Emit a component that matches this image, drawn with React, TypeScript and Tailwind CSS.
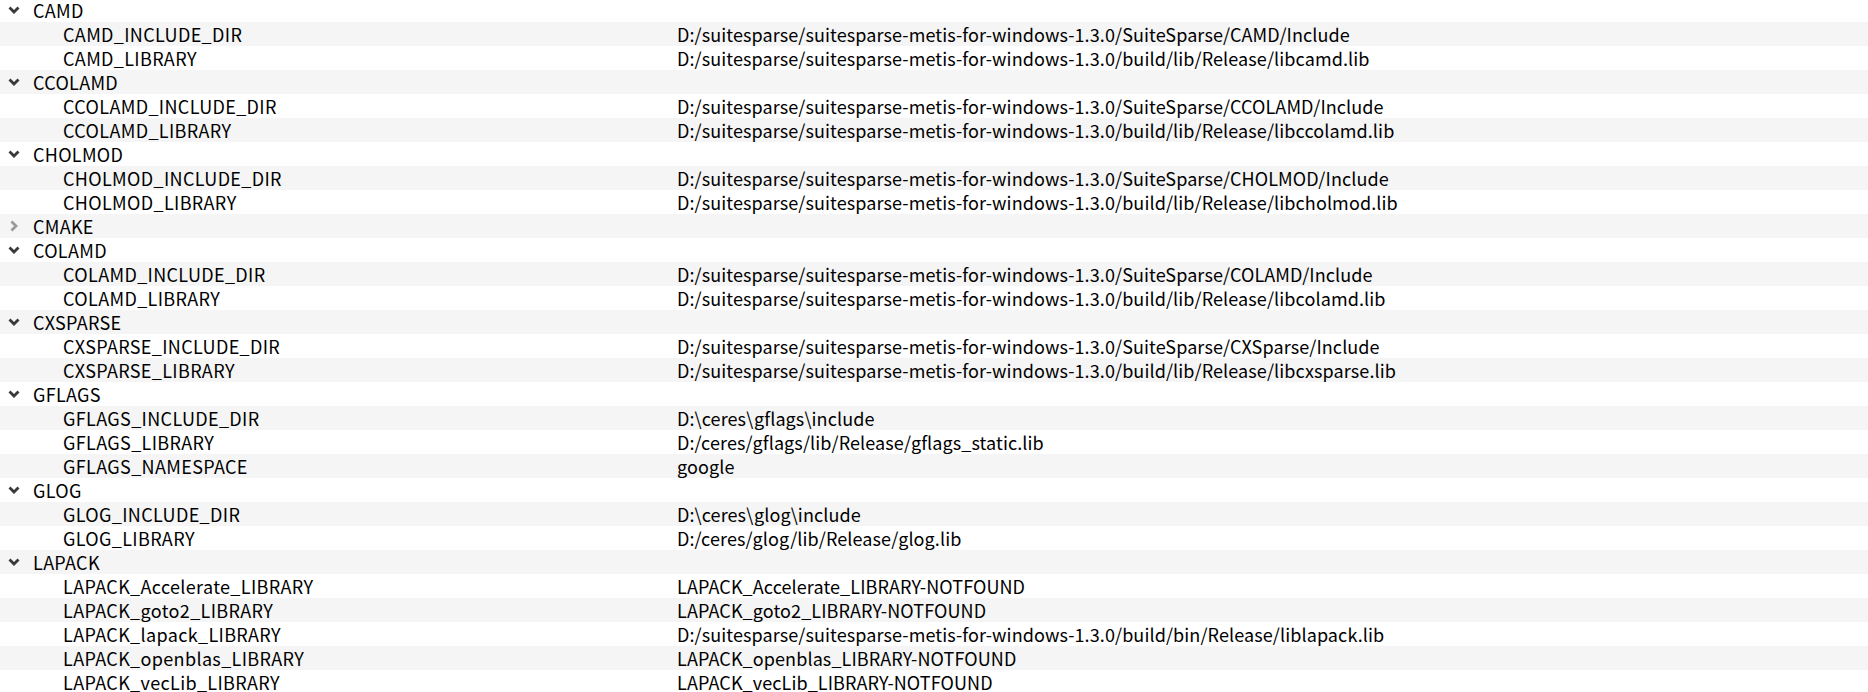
import React from "react";

type Row =
  | { kind: "group"; name: string; open: boolean }
  | { kind: "item"; name: string; value: string };

const S = "D:/suitesparse/suitesparse-metis-for-windows-1.3.0";

const rows: Row[] = [
  { kind: "group", name: "CAMD", open: true },
  { kind: "item", name: "CAMD_INCLUDE_DIR", value: `${S}/SuiteSparse/CAMD/Include` },
  { kind: "item", name: "CAMD_LIBRARY", value: `${S}/build/lib/Release/libcamd.lib` },
  { kind: "group", name: "CCOLAMD", open: true },
  { kind: "item", name: "CCOLAMD_INCLUDE_DIR", value: `${S}/SuiteSparse/CCOLAMD/Include` },
  { kind: "item", name: "CCOLAMD_LIBRARY", value: `${S}/build/lib/Release/libccolamd.lib` },
  { kind: "group", name: "CHOLMOD", open: true },
  { kind: "item", name: "CHOLMOD_INCLUDE_DIR", value: `${S}/SuiteSparse/CHOLMOD/Include` },
  { kind: "item", name: "CHOLMOD_LIBRARY", value: `${S}/build/lib/Release/libcholmod.lib` },
  { kind: "group", name: "CMAKE", open: false },
  { kind: "group", name: "COLAMD", open: true },
  { kind: "item", name: "COLAMD_INCLUDE_DIR", value: `${S}/SuiteSparse/COLAMD/Include` },
  { kind: "item", name: "COLAMD_LIBRARY", value: `${S}/build/lib/Release/libcolamd.lib` },
  { kind: "group", name: "CXSPARSE", open: true },
  { kind: "item", name: "CXSPARSE_INCLUDE_DIR", value: `${S}/SuiteSparse/CXSparse/Include` },
  { kind: "item", name: "CXSPARSE_LIBRARY", value: `${S}/build/lib/Release/libcxsparse.lib` },
  { kind: "group", name: "GFLAGS", open: true },
  { kind: "item", name: "GFLAGS_INCLUDE_DIR", value: "D:\\ceres\\gflags\\include" },
  { kind: "item", name: "GFLAGS_LIBRARY", value: "D:/ceres/gflags/lib/Release/gflags_static.lib" },
  { kind: "item", name: "GFLAGS_NAMESPACE", value: "google" },
  { kind: "group", name: "GLOG", open: true },
  { kind: "item", name: "GLOG_INCLUDE_DIR", value: "D:\\ceres\\glog\\include" },
  { kind: "item", name: "GLOG_LIBRARY", value: "D:/ceres/glog/lib/Release/glog.lib" },
  { kind: "group", name: "LAPACK", open: true },
  { kind: "item", name: "LAPACK_Accelerate_LIBRARY", value: "LAPACK_Accelerate_LIBRARY-NOTFOUND" },
  { kind: "item", name: "LAPACK_goto2_LIBRARY", value: "LAPACK_goto2_LIBRARY-NOTFOUND" },
  { kind: "item", name: "LAPACK_lapack_LIBRARY", value: `${S}/build/bin/Release/liblapack.lib` },
  { kind: "item", name: "LAPACK_openblas_LIBRARY", value: "LAPACK_openblas_LIBRARY-NOTFOUND" },
  { kind: "item", name: "LAPACK_vecLib_LIBRARY", value: "LAPACK_vecLib_LIBRARY-NOTFOUND" },
];

function Chevron({ open }: { open: boolean }) {
  if (open) {
    return (
      <svg width="12" height="8" viewBox="0 0 12 8" className="block">
        <path d="M1.5 1.5 L6 6 L10.5 1.5" fill="none" stroke="#383838" strokeWidth="2.8" />
      </svg>
    );
  }
  return (
    <svg width="8" height="12" viewBox="0 0 8 12" className="block">
      <path d="M1.5 1.5 L6 6 L1.5 10.5" fill="none" stroke="#9a9a9a" strokeWidth="2.8" />
    </svg>
  );
}

export default function App() {
  return (
    <div
      className="w-[1868px] h-[692px] overflow-hidden bg-white text-[#000000] text-[18px] leading-[24px]"
      style={{ fontFamily: '"Noto Sans CJK SC", "Noto Sans", sans-serif' }}
    >
      <div className="-mt-[2px]">
        {rows.map((r, i) => (
          <div
            key={i}
            className={`flex h-[24px] items-center ${i % 2 === 1 ? "bg-[#f5f5f5]" : "bg-white"}`}
          >
            {r.kind === "group" ? (
              <div className="flex items-center">
                <div className="w-[28px] flex justify-center">
                  <Chevron open={r.open} />
                </div>
                <span className="pl-[5px] whitespace-nowrap tracking-[0.3px]">{r.name}</span>
              </div>
            ) : (
              <>
                <div className="w-[677px] pl-[63px] whitespace-nowrap tracking-[0.35px]">{r.name}</div>
                <div className="whitespace-nowrap tracking-[0.1px]">{r.value}</div>
              </>
            )}
          </div>
        ))}
      </div>
    </div>
  );
}
